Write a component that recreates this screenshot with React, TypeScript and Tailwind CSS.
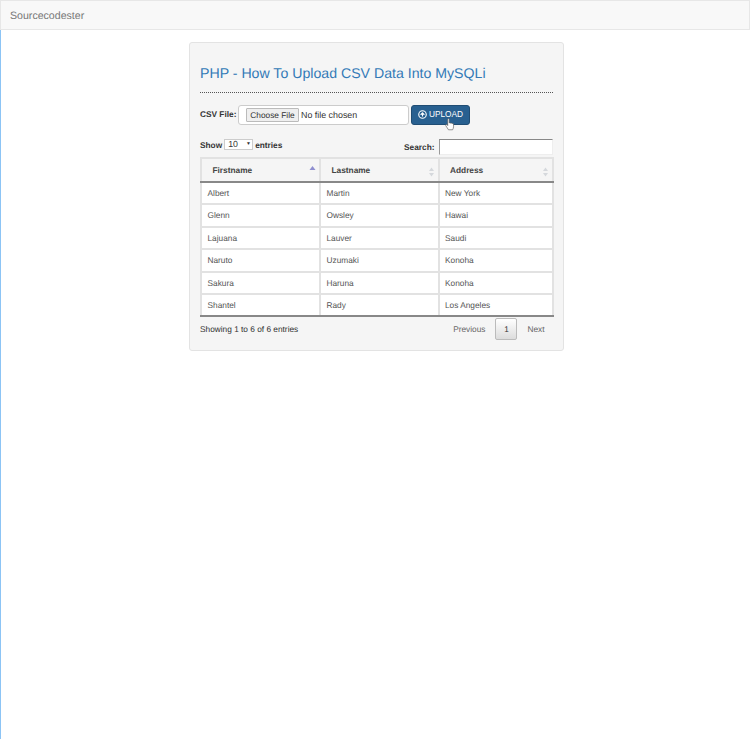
import { CircleArrowUp } from 'lucide-react'

const rows = [
  ['Albert', 'Martin', 'New York'],
  ['Glenn', 'Owsley', 'Hawai'],
  ['Lajuana', 'Lauver', 'Saudi'],
  ['Naruto', 'Uzumaki', 'Konoha'],
  ['Sakura', 'Haruna', 'Konoha'],
  ['Shantel', 'Rady', 'Los Angeles'],
]

function SortIcon({ active }: { active?: boolean }) {
  if (active) {
    return (
      <svg width="7" height="10" viewBox="0 0 7 10" className="absolute right-[3px] top-[6px]">
        <path d="M3.5 1 L6.5 5 L0.5 5 Z" fill="#8f8fd0" />
      </svg>
    )
  }
  return (
    <svg width="7" height="10" viewBox="0 0 7 10" className="absolute right-[3px] top-[8px]">
      <path d="M3.5 0.5 L6 4 L1 4 Z" fill="#d5d8dc" />
      <path d="M3.5 9.5 L6 6 L1 6 Z" fill="#d5d8dc" />
    </svg>
  )
}

function HandCursor() {
  return (
    <svg width="10" height="13" viewBox="0 0 11 14" className="absolute left-[33px] top-[12px]">
      <path
        d="M3 1.2 C3 0.2 4.6 0.2 4.6 1.2 L4.6 5.4 C5 4.8 6 4.9 6.2 5.6 C6.6 5.1 7.6 5.2 7.8 6 C8.3 5.6 9.4 5.8 9.4 6.8 L9.4 9.6 C9.4 11 8.8 11.6 8.4 12.8 L3.8 12.8 C3.2 11.4 1.8 10 0.9 8.4 C0.4 7.4 1.5 6.6 2.3 7.4 L3 8.2 Z"
        fill="#fff"
        stroke="#555"
        strokeWidth="0.7"
      />
    </svg>
  )
}

export default function App() {
  return (
    <div className="relative min-h-[739px] bg-white font-['Liberation_Sans',Arial,sans-serif] text-[#333] [text-rendering:geometricPrecision]">
      <div className="h-[30px] bg-[#f8f8f8] border border-[#e7e7e7] pl-[9px] pt-[3px] flex items-center text-[10.6px] text-[#777]">
        Sourcecodester
      </div>

      <div className="flex">
        <div className="w-px bg-[#8cc4f5] self-stretch h-[709px]" />
        <div className="flex-1 pl-[187.5px]">
          <div className="mt-3 w-[375.5px] h-[309px] bg-[#f5f5f5] border border-[#e3e3e3] rounded-[3px] px-[10.5px]">
            <h3 className="mt-[21px] text-[14.15px] leading-[18px] font-normal text-[#337ab7]">
              PHP - How To Upload CSV Data Into MySQLi
            </h3>
            <div className="mt-[10px] border-t border-dotted border-[#555]" />

            <div className="mt-[11px] flex items-center h-[21px]">
              <label className="text-[8.3px] font-bold w-[38px] whitespace-nowrap">CSV File:</label>
              <div className="w-[171px] h-[20px] bg-white border border-[#ccc] rounded-[3px] flex items-center pl-[7px] text-[8.3px]">
                <span className="mt-[1px] h-[14px] w-[53px] bg-[#efefef] border border-[#bbb] rounded-[1px] flex items-center justify-center">
                  Choose File
                </span>
                <span className="mt-[2px] ml-[2px] text-[8.9px] text-[#333]">No file chosen</span>
              </div>
              <button className="relative ml-[2px] w-[59px] h-[20px] bg-[#286090] border border-[#204d74] rounded-[3px] text-white text-[8.3px] flex items-center justify-center gap-[2px]">
                <CircleArrowUp size={9} strokeWidth={3} className="text-white" />
                UPLOAD
                <HandCursor />
              </button>
            </div>

            <div className="mt-[14px] flex justify-between items-end h-[16px]">
              <div className="flex items-center text-[8.3px] font-bold pb-[4px]">
                Show
                <span className="mx-[2px] w-[29px] h-[11px] bg-white border border-[#ccc] flex items-center pl-[3px] gap-[8px] text-[8.8px] font-normal">
                  10
                  <span className="text-[5px]">▼</span>
                </span>
                entries
              </div>
              <div className="flex items-center text-[8.3px] font-bold">
                Search:
                <span className="ml-[4px] w-[114px] h-[16px] bg-white border border-[#eee] border-t-[#888] border-l-[#999]" />
              </div>
            </div>

            <table className="mt-[2px] w-[351.5px] table-fixed border-collapse text-[8.3px]">
              <colgroup>
                <col className="w-[119px]" />
                <col className="w-[118.5px]" />
                <col className="w-[114px]" />
              </colgroup>
              <thead>
                <tr className="h-[24px] bg-[#f5f5f5]">
                  {['Firstname', 'Lastname', 'Address'].map((h, i) => (
                    <th
                      key={h}
                      className="relative border-2 border-[#e2e2e2] border-b-[#888] text-left pl-[10.5px] font-bold text-[#444]"
                    >
                      {h}
                      <SortIcon active={i === 0} />
                    </th>
                  ))}
                </tr>
              </thead>
              <tbody>
                {rows.map((r, i) => (
                  <tr key={r[0]} className="h-[22.4px] bg-white">
                    {r.map(c => (
                      <td
                        key={c}
                        className={`border-x-2 border-b-2 border-[#e2e2e2] pl-[5.5px] text-[#555] ${i === rows.length - 1 ? 'border-b-[#888]' : ''}`}
                      >
                        {c}
                      </td>
                    ))}
                  </tr>
                ))}
              </tbody>
            </table>

            <div className="mt-[0.5px] flex justify-between items-center text-[8.3px]">
              <span>Showing 1 to 6 of 6 entries</span>
              <div className="flex items-center text-[#666]">
                <span className="mr-[10px]">Previous</span>
                <span className="w-[22px] h-[22px] border border-[#bbb] rounded-[2px] bg-gradient-to-b from-white to-[#dcdcdc] flex items-center justify-center text-[#333]">
                  1
                </span>
                <span className="ml-[10px] mr-[8px]">Next</span>
              </div>
            </div>
          </div>
        </div>
      </div>
    </div>
  )
}
